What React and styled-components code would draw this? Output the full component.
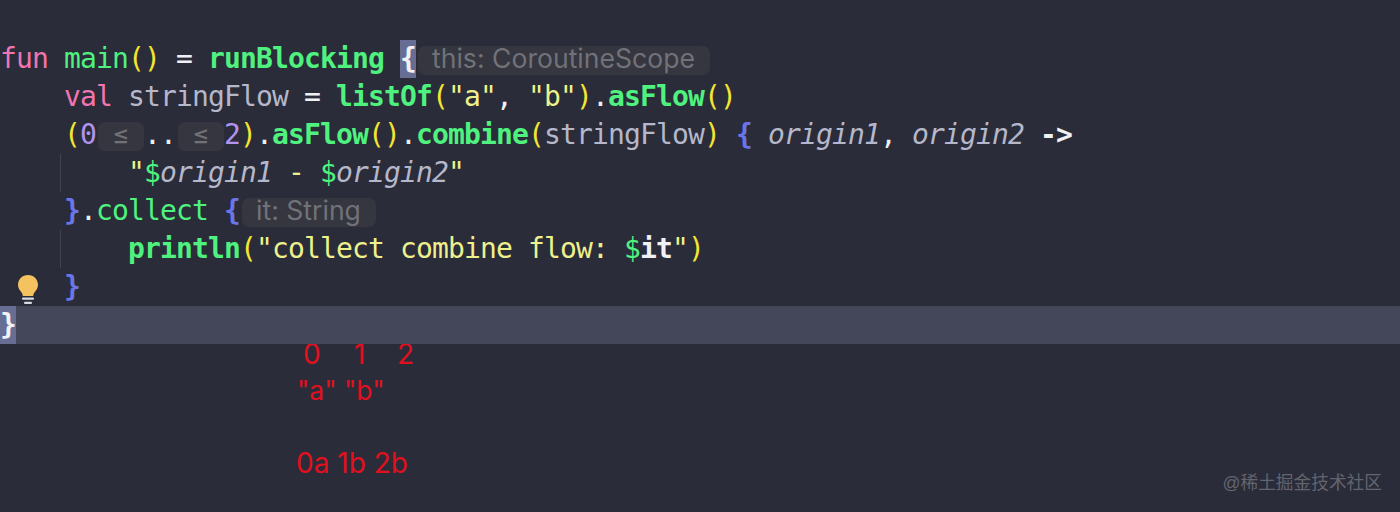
import React from "react";
import styled, { createGlobalStyle } from "styled-components";

const Global = createGlobalStyle`
  html, body { margin: 0; padding: 0; background: #2a2c39; }
`;

const colors = {
  kw: "#f075b0",
  fn: "#4ff27f",
  paren: "#f5e430",
  str: "#eef08c",
  num: "#b294ee",
  plain: "#b5b7ca",
  op: "#f1f1f4",
  brace: "#6a76e8",
};

const Page = styled.div`
  position: relative;
  width: 1400px;
  height: 512px;
  overflow: hidden;
  display: flex;
  flex-direction: column;
  padding-top: 40px;
  box-sizing: border-box;
  background: #2a2c39;
`;

const Line = styled.div`
  position: relative;
  height: 38px;
  line-height: 38px;
  white-space: pre;
  font-family: "DejaVu Sans Mono", monospace;
  font-size: 28px;
  letter-spacing: -0.86px;
  color: ${colors.plain};
  background: ${(p) => (p.$current ? "#444759" : "transparent")};
`;

const T = styled.span`
  color: ${(p) => colors[p.$c]};
  font-weight: ${(p) => (p.$b ? 700 : 400)};
  font-style: ${(p) => (p.$i ? "italic" : "normal")};
`;

const Matched = styled.span`
  display: inline-block;
  vertical-align: top;
  height: 38px;
  color: ${colors.op};
  background: #686d94;
  font-weight: 700;
`;

const Hint = styled.span`
  display: inline-block;
  vertical-align: top;
  box-sizing: border-box;
  height: 29px;
  line-height: 25px;
  margin: 6px 0 0 2px;
  width: ${(p) => p.$w}px;
  padding-left: ${(p) => p.$pl}px;
  border-radius: 7px;
  background: #35363f;
  color: #707278;
  font-family: Inter, "Liberation Sans", sans-serif;
  font-size: 26.6px;
  letter-spacing: 0;
`;

const Guide = styled.i`
  position: absolute;
  left: 60px;
  top: 0;
  bottom: 0;
  width: 1px;
  background: #41434f;
`;

const Gutter = styled.span`
  display: inline-flex;
  vertical-align: top;
  box-sizing: border-box;
  width: 64px;
  height: 38px;
  padding: 7px 0 0 18px;
`;

const Notes = styled.div`
  display: flex;
  margin-left: ${(p) => p.$left}px;
  margin-top: ${(p) => p.$top}px;
  height: 36px;
  line-height: 36px;
  white-space: pre;
  color: #e2101e;
  font-family: Inter, "Liberation Sans", sans-serif;
  font-size: ${(p) => p.$size}px;
`;

const Cell = styled.span`
  width: ${(p) => p.$w}px;
`;

const Watermark = styled.div`
  position: absolute;
  right: 18px;
  bottom: 17px;
  line-height: 24px;
  color: #62646f;
  font-family: "Liberation Sans", "Noto Sans CJK SC", sans-serif;
  font-size: 17.7px;
`;

function Bulb() {
  return (
    <svg width="20" height="29" viewBox="0 0 20 29">
      <path
        d="M10 0C4.400 0 0 4.200 0 9.800c0 3.400 1.700 5.400 3.200 7.300.8 1 1.500 2.300 1.600 3.900h10.400c.1-1.600.8-2.900 1.600-3.900 1.500-1.900 3.200-3.900 3.200-7.300C20 4.200 15.600 0 10 0z"
        fill="#f4c35f"
      />
      <rect x="4" y="22.500" width="12" height="2.200" rx="1" fill="#d8d9de" />
      <rect x="6" y="26.800" width="8" height="2.200" rx="1" fill="#d8d9de" />
    </svg>
  );
}

export default function App() {
  return (
    <Page>
      <Global />
      <Line>
        <T $c="kw">fun </T>
        <T $c="fn">main</T>
        <T $c="paren">()</T>
        <T $c="op"> = </T>
        <T $c="fn" $b>runBlocking</T>
        {" "}
        <Matched>{"{"}</Matched>
        <Hint $w={292} $pl={14}>this: CoroutineScope</Hint>
      </Line>
      <Line>
        {"    "}
        <T $c="kw">val </T>
        stringFlow
        <T $c="op"> = </T>
        <T $c="fn" $b>listOf</T>
        <T $c="paren">(</T>
        <T $c="str">"a"</T>
        <T $c="op">, </T>
        <T $c="str">"b"</T>
        <T $c="paren">)</T>
        <T $c="op">.</T>
        <T $c="fn" $b>asFlow</T>
        <T $c="paren">()</T>
      </Line>
      <Line>
        {"    "}
        <T $c="paren">(</T>
        <T $c="num">0</T>
        <Hint $w={46} $pl={14}>≤</Hint>
        <T $c="op">..</T>
        <Hint $w={46} $pl={14}>≤</Hint>
        <T $c="num">2</T>
        <T $c="paren">)</T>
        <T $c="op">.</T>
        <T $c="fn" $b>asFlow</T>
        <T $c="paren">()</T>
        <T $c="op">.</T>
        <T $c="fn" $b>combine</T>
        <T $c="paren">(</T>
        stringFlow
        <T $c="paren">)</T>
        {" "}
        <T $c="brace" $b>{"{"}</T>
        {" "}
        <T $i>origin1</T>
        <T $c="op">, </T>
        <T $i>origin2</T>
        {" "}
        <T $c="op" $b>{"->"}</T>
      </Line>
      <Line>
        <Guide />
        {"        "}
        <T $c="str">"</T>
        <T $c="fn">$</T>
        <T $i>origin1</T>
        <T $c="str"> - </T>
        <T $c="fn">$</T>
        <T $i>origin2</T>
        <T $c="str">"</T>
      </Line>
      <Line>
        {"    "}
        <T $c="brace" $b>{"}"}</T>
        <T $c="op">.</T>
        <T $c="fn">collect</T>
        {" "}
        <T $c="brace" $b>{"{"}</T>
        <Hint $w={134} $pl={14}>it: String</Hint>
      </Line>
      <Line>
        <Guide />
        {"        "}
        <T $c="fn" $b>println</T>
        <T $c="paren">(</T>
        <T $c="str">"collect combine flow: </T>
        <T $c="fn">$</T>
        <T $c="op" $b>it</T>
        <T $c="str">"</T>
        <T $c="paren">)</T>
      </Line>
      <Line>
        <Gutter><Bulb /></Gutter>
        <T $c="brace" $b>{"}"}</T>
      </Line>
      <Line $current>
        <Matched>{"}"}</Matched>
      </Line>
      <Notes $left={303} $top={-8} $size={28}>
        <Cell $w={51}>0</Cell>
        <Cell $w={43}>1</Cell>
        <Cell $w={16}>2</Cell>
      </Notes>
      <Notes $left={297} $top={0} $size={26.5}>{'"a" "b"'}</Notes>
      <Notes $left={296} $top={37} $size={28}>{"0a 1b 2b"}</Notes>
      <Watermark>@稀土掘金技术社区</Watermark>
    </Page>
  );
}
